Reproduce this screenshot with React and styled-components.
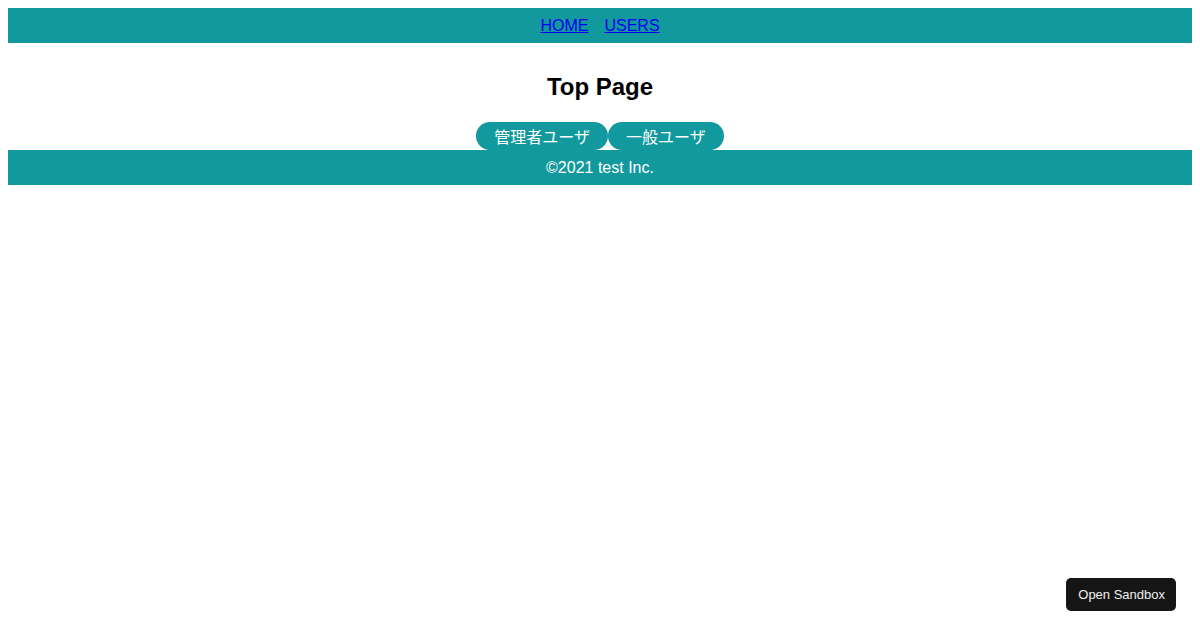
import React from 'react';
import styled, { createGlobalStyle } from 'styled-components';

const teal = '#11999e';

const GlobalStyle = createGlobalStyle`
  body {
    margin: 8px;
    font-family: "Liberation Sans", Arial, "Noto Sans CJK JP", sans-serif;
    background: #fff;
  }
`;

const Header = styled.header`
  display: flex;
  justify-content: center;
  align-items: center;
  gap: 16px;
  height: 35px;
  background: ${teal};
`;

const NavLink = styled.a`
  font-size: 16px;
  color: #0000ee;
  text-decoration: underline;
  cursor: pointer;
`;

const Main = styled.main`
  display: flex;
  flex-direction: column;
  align-items: center;
`;

const Title = styled.h2`
  margin: 30px 0 21px;
  font-size: 24px;
  font-weight: 700;
  color: #000;
`;

const ButtonRow = styled.div`
  display: flex;
  justify-content: center;
`;

const PillButton = styled.button`
  height: 28px;
  padding: 0 18px;
  border: none;
  border-radius: 9999px;
  background: ${teal};
  color: #fff;
  font-family: "Liberation Sans", Arial, "Noto Sans CJK JP", sans-serif;
  font-size: 16px;
  cursor: pointer;
`;

const Footer = styled.footer`
  display: flex;
  justify-content: center;
  align-items: center;
  height: 35px;
  background: ${teal};
  color: #fff;
  font-size: 16px;
`;

// CodeSandbox overlay button, floats over the page
const SandboxButton = styled.a`
  position: fixed;
  right: 24px;
  bottom: 19px;
  display: flex;
  align-items: center;
  height: 33px;
  padding: 0 11px 0 12px;
  border-radius: 5px;
  background: #151515;
  color: #f0f0f0;
  font-family: "Liberation Sans", Arial, sans-serif;
  font-size: 13px;
  text-decoration: none;
`;

export default function App() {
  return (
    <>
      <GlobalStyle />
      <Header>
        <NavLink href="#">HOME</NavLink>
        <NavLink href="#">USERS</NavLink>
      </Header>
      <Main>
        <Title>Top Page</Title>
        <ButtonRow>
          <PillButton>管理者ユーザ</PillButton>
          <PillButton>一般ユーザ</PillButton>
        </ButtonRow>
      </Main>
      <Footer>©2021 test Inc.</Footer>
      <SandboxButton href="#">Open Sandbox</SandboxButton>
    </>
  );
}
